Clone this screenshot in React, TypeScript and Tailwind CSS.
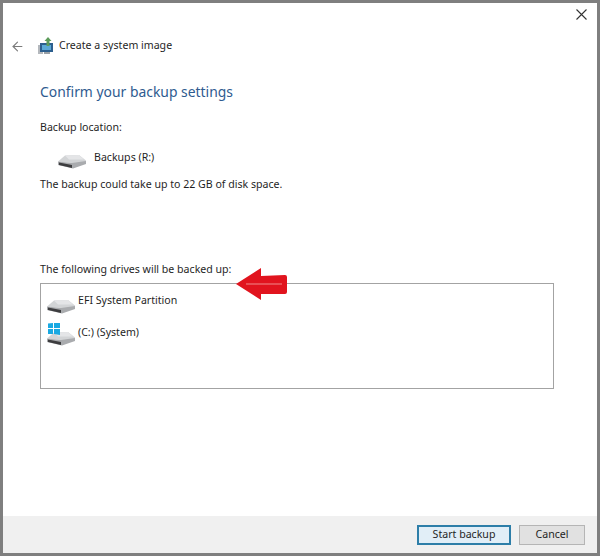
import { ArrowLeft } from 'lucide-react';

function Drive({ windows = false }: { windows?: boolean }) {
  return (
    <svg width="30" height="24" viewBox="0 0 30 24" className="shrink-0">
      <path d="M1 15.5 L8 9.5 L22 9 L29 14.5 L29 17 L15 17 Z" fill="#d2d4d6" />
      <path d="M8 9.5 L22 9 L27 13.5 L12 13.5 Z" fill="#e4e5e7" />
      <path d="M1 15.5 L15 17 L29 15 L29 18 L16 22.5 L1 19 Z" fill="#a9abae" />
      <path d="M2 16.5 L15 19 L15 22 L2 19 Z" fill="#3d3d3f" />
      {windows && (
        <g fill="#19a9e2">
          <path d="M2 0.5 L7 0 L7 5 L2 5 Z" />
          <path d="M8 0 L14 0 L14 5 L8 5 Z" />
          <path d="M2 6 L7 6 L7 11 L2 11 Z" />
          <path d="M8 6 L14 6 L14 12 L8 11 Z" />
        </g>
      )}
    </svg>
  );
}

function SystemImageIcon() {
  return (
    <svg width="16" height="18" viewBox="0 0 16 18" className="shrink-0">
      <rect x="0" y="8" width="5" height="9" fill="#b4b8bd" />
      <rect x="2" y="6" width="13" height="9" fill="#2c5f8e" />
      <rect x="4" y="8" width="9" height="5" fill="#5aa9d6" />
      <rect x="6" y="15" width="6" height="2" fill="#9aa0a6" />
      <path d="M10 0 L13.5 4 L11.5 4 L11.5 9 L8.5 9 L8.5 4 L6.5 4 Z" fill="#5c9c5a" />
    </svg>
  );
}

export default function App() {
  return (
    <div className="relative flex h-[556px] w-[600px] flex-col border-[3px] border-[#7f7f7f] bg-white font-['Noto_Sans',sans-serif] text-[10.6px] text-[#1f1f1f]">
      <div className="flex justify-end pr-[10px] pt-[6px]">
        <svg width="11" height="11" viewBox="0 0 11 11">
          <path d="M0.5 0.5 L10.5 10.5 M10.5 0.5 L0.5 10.5" stroke="#333" strokeWidth="1.1" />
        </svg>
      </div>

      <div className="mt-[17px] flex items-center pl-[7px]">
        <ArrowLeft size={15} strokeWidth={1.8} className="text-[#7b7b7b]" />
        <div className="ml-[13px] flex items-center gap-[5px]">
          <SystemImageIcon />
          <span>Create a system image</span>
        </div>
      </div>

      <div className="flex flex-1 flex-col pl-[37px] pr-[43px]">
        <h1 className="mt-[27px] text-[13.9px] leading-[20px] text-[#2f5b8f]">Confirm your backup settings</h1>
        <p className="mt-[18px] leading-[15px]">Backup location:</p>
        <div className="mt-[13px] flex h-[20px] items-center pl-[17px]">
          <Drive />
          <span className="ml-[7px]">Backups (R:)</span>
        </div>
        <p className="mt-[9px] leading-[15px]">The backup could take up to 22 GB of disk space.</p>
        <p className="mt-[70px] leading-[15px]">The following drives will be backed up:</p>
        <div className="mt-[6px] h-[106px] border border-[#a3a3a3] pl-[5px] pt-[7px]">
          <div className="flex h-[24px] items-start gap-[2px]">
            <Drive />
            <span className="mt-[2px]">EFI System Partition</span>
          </div>
          <div className="mt-[8px] flex h-[24px] items-start gap-[2px]">
            <Drive windows />
            <span className="mt-[2px]">(C:) (System)</span>
          </div>
        </div>
      </div>

      <div className="flex h-[37px] items-center justify-end gap-[8px] bg-[#f0f0f0] pr-[12px]">
        <button className="h-[20px] w-[94px] border-2 border-[#2d7ea8] bg-[#e1eef7] text-[10.6px] text-[#1f1f1f]">
          Start backup
        </button>
        <button className="h-[20px] w-[66px] border border-[#b5b5b5] bg-[#e1e1e1] text-[10.6px] text-[#1f1f1f]">
          Cancel
        </button>
      </div>

      {/* red callout arrow drawn over the screenshot */}
      <svg width="54" height="34" viewBox="0 0 54 34" className="absolute left-[232px] top-[264px]">
        <path d="M1 17 L26 1 L26 9 L50 8 Q52 8 52 10 L52 25 Q52 27 50 27 L26 27 L26 33 Z" fill="#e1141e" />
        <path d="M11 17 L47 17" stroke="#f08a8a" strokeWidth="1" />
      </svg>
    </div>
  );
}
